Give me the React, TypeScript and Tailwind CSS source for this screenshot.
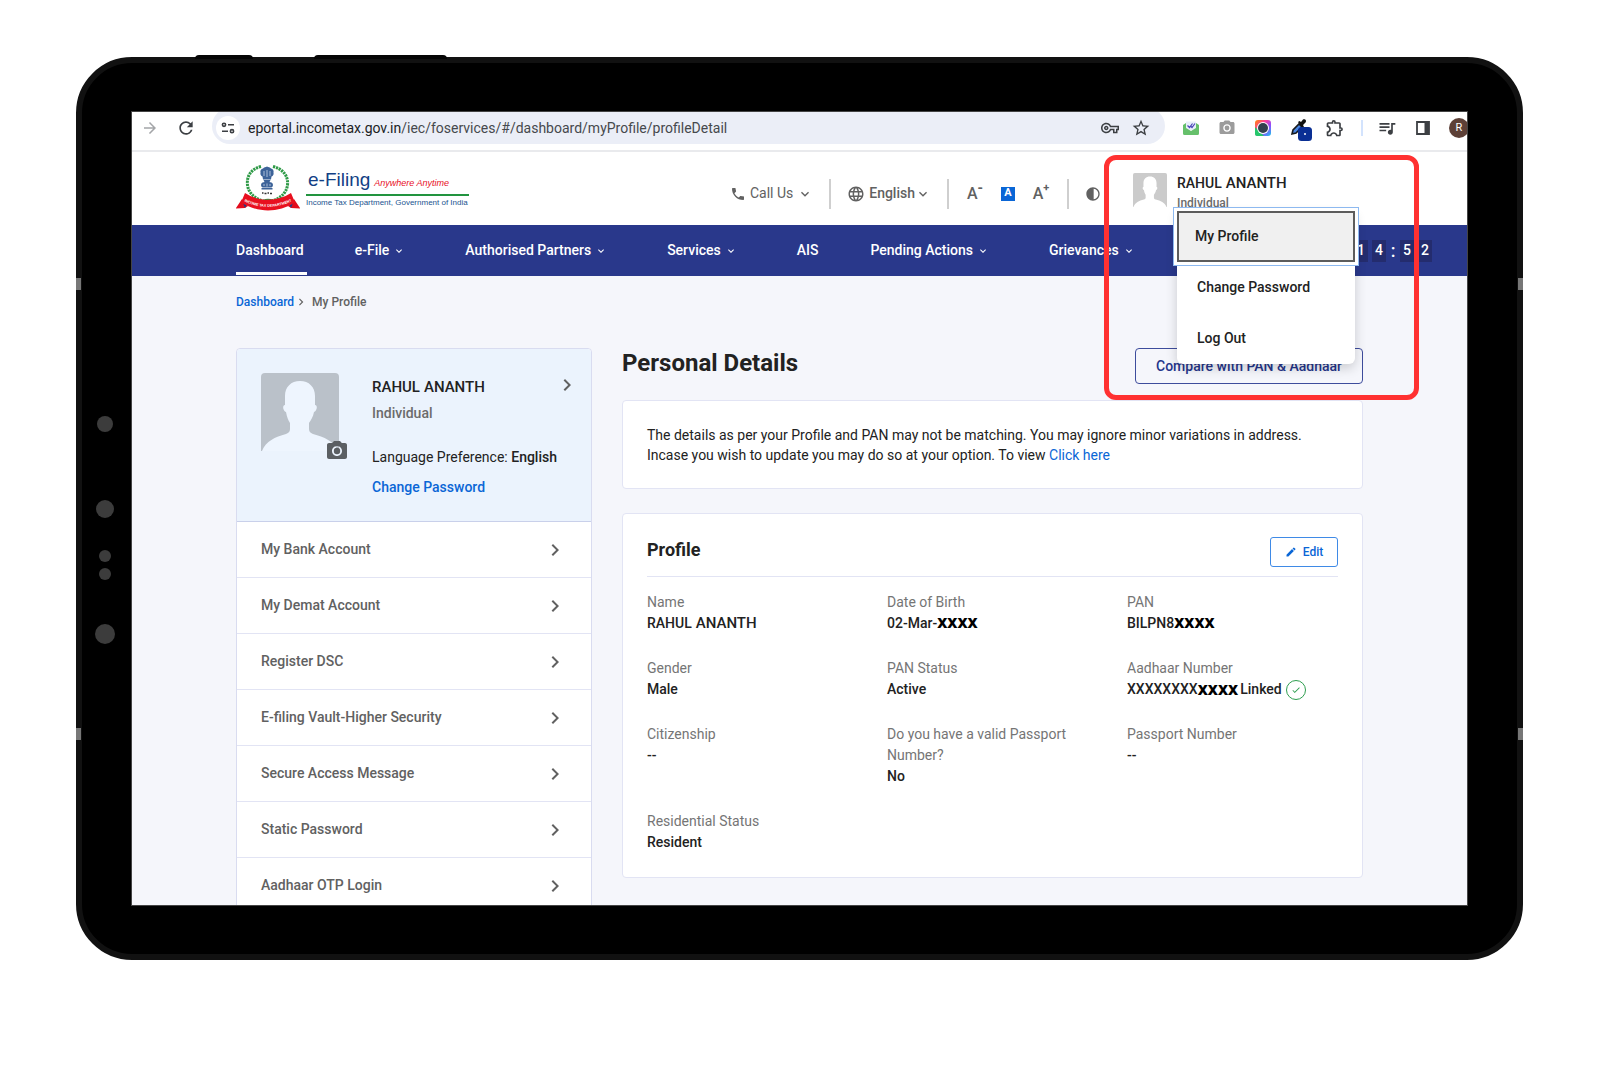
import type { ReactNode } from 'react';
import {
  MdArrowForward,
  MdCameraAlt,
  MdCheck,
  MdChevronRight,
  MdContrast,
  MdEdit,
  MdExpandMore,
  MdLanguage,
  MdOutlineExtension,
  MdOutlineVpnKey,
  MdPhone,
  MdQueueMusic,
  MdRefresh,
  MdStarOutline,
} from 'react-icons/md';

const navItems = [
  { label: 'e-File', menu: true },
  { label: 'Authorised Partners', menu: true },
  { label: 'Services', menu: true },
  { label: 'AIS', menu: false },
  { label: 'Pending Actions', menu: true },
  { label: 'Grievances', menu: true },
];

const sideLinks = [
  'My Bank Account',
  'My Demat Account',
  'Register DSC',
  'E-filing Vault-Higher Security',
  'Secure Access Message',
  'Static Password',
  'Aadhaar OTP Login',
];

const cameraDots = ['size-4', 'mt-[68px] size-[18px]', 'mt-8 size-3', 'mt-1.5 size-3', 'mt-11 size-5'];

function Masked() {
  return <span className="font-['Open_Sans',sans-serif] leading-none font-extrabold text-black">XXXX</span>;
}

function FullName() {
  return (
    <span className="inline-flex items-baseline gap-1">
      <span>RAHUL</span>
      <span className="text-[15px]">ANANTH</span>
    </span>
  );
}

const details: { label: string; value: ReactNode }[] = [
  { label: 'Name', value: <FullName /> },
  { label: 'Date of Birth', value: <>02-Mar-<Masked /></> },
  { label: 'PAN', value: <>BILPN8<Masked /></> },
  { label: 'Gender', value: 'Male' },
  { label: 'PAN Status', value: 'Active' },
  {
    label: 'Aadhaar Number',
    value: (
      <span className="flex items-center">
        XXXXXXXX<Masked />
        <span className="ml-0.5">Linked</span>
        <span className="-my-1 ml-1 flex size-5 items-center justify-center rounded-full border border-[#2e9e4f] text-[#2e9e4f]">
          <MdCheck className="size-2.5" />
        </span>
      </span>
    ),
  },
  { label: 'Citizenship', value: '--' },
  { label: 'Do you have a valid Passport Number?', value: 'No' },
  { label: 'Passport Number', value: '--' },
  { label: 'Residential Status', value: 'Resident' },
];

function Silhouette({ className, bg, fg }: { className: string; bg: string; fg: string }) {
  return (
    <svg viewBox="0 0 78 78" className={className} aria-hidden="true">
      <path d="M4 0h70a4 4 0 0 1 4 4v74H0V4a4 4 0 0 1 4-4z" fill={bg} />
      <path
        d="M39 8c-9 0-15 6-15 15v9c-3 0-2 6 1 7 1 5 2 8 4 11v6c0 2-1 4-4 5C14 64 5 68 1 78h76c-4-10-14-14-25-17-3-1-4-3-4-5v-6c2-3 4-6 5-11 3-1 4-7 1-7v-9c0-9-6-15-15-15z"
        fill={fg}
      />
    </svg>
  );
}

function Logo() {
  return (
    <div className="flex items-start gap-1.5">
      <svg viewBox="0 0 64 46" className="h-[46px] w-16 shrink-0" role="img" aria-label="Income Tax Department emblem">
        <g fill="none" stroke="#2f9a47">
          <path d="M25 1.5C15 4 10.500 11 11.500 20c1 8 7 13.500 16 16" strokeWidth="3" strokeDasharray="2.200 .8" />
          <path d="M37 1.500C47 4 52.500 11 51.500 20c-1 8-7 13.500-16 16" strokeWidth="3" strokeDasharray="2.200 .8" />
          <path d="M27 36c4-2 6-2 10 0" strokeWidth="2" />
        </g>
        <g fill="#3d6399">
          <path d="M27 3.500c1-1.500 2.500-1 4-2 1.500 1 3 .5 4 2 2 .5 3 2 2.500 4 .5 2-.5 3.500-2 4l-.5 3h-8l-.5-3c-1.500-.5-2.500-2-2-4-.5-2 .5-3.500 2.500-4z" />
          <path d="M27.500 15h7l-1 2h-5z" />
          <path d="M26.500 17.500c3-1 6-1 9 0 2 1 2 4 0 5h-9c-2-1-2-4 0-5z" />
          <path d="M25.500 23h11v1.500h-11z" />
        </g>
        <g stroke="#c8d5e8" strokeWidth=".8" fill="none">
          <path d="M28 6v5M31 5v7M34 6v5M28 19v2M31 18.500v3M34 19v2" />
        </g>
        <path d="M26 28h1.500M28.500 28.500h2M31.500 28h1.500M34 28.500h2" stroke="#333" strokeWidth="1.500" />
        <path d="M0 43l6-9 6 7-3 2-9 .5zM64 43l-6-9-6 7 3 2 9 .5z" fill="#e30b1c" />
        <path d="M7 38l4 1-2 4zM57 38l-4 1 2 4z" fill="#1f3d86" />
        <path d="M9 28c14 9 32 9 46 0l4 9.500c-17 10.500-37 10.500-54 0z" fill="#e8101f" />
        <path id="ribbon" d="M7 35.500c15 8.500 35 8.500 50 0" fill="none" />
        <text
          fill="#fff"
          className="font-['Liberation_Sans',Arial,sans-serif] font-bold"
          fontSize="3.700"
          textAnchor="middle"
        >
          <textPath href="#ribbon" startOffset="50%">INCOME TAX DEPARTMENT</textPath>
        </text>
      </svg>
      <div className="mt-1 w-[163px] font-['Liberation_Sans',Arial,sans-serif] whitespace-nowrap">
        <div className="flex items-baseline gap-1 border-b-2 border-[#22943f] pl-0.5 leading-[22px]">
          <span className="text-[19px] text-[#123f85]">e-Filing</span>
          <span className="text-[9px] text-[#e8101f] italic">Anywhere Anytime</span>
        </div>
        <div className="text-[8px] leading-[14px] text-[#1b548f]">Income Tax Department, Government of India</div>
      </div>
    </div>
  );
}

function BrowserBar() {
  return (
    <div className="flex h-10 shrink-0 items-start overflow-hidden border-b-2 border-[#e9eaed] bg-white text-[#3c3f43]">
      <div className="flex h-8 items-center gap-[17px] pr-4 pl-[9px]">
        <button aria-label="Forward" className="text-[#a3a5a8]">
          <MdArrowForward className="size-[18px]" />
        </button>
        <button aria-label="Reload">
          <MdRefresh className="size-5" />
        </button>
      </div>
      <div className="-mt-1 flex h-9 min-w-0 flex-1 items-center rounded-full bg-[#ebeef7] pt-1 pr-3.5 pl-1">
        <button aria-label="Site information" className="flex size-6 items-center justify-center rounded-full bg-white">
          <svg viewBox="0 0 14 12" className="h-3 w-3.5" fill="none" stroke="currentColor" strokeWidth="1.600">
            <circle cx="3" cy="2.800" r="1.600" />
            <path d="M7 2.800h6M1 9.200h6" />
            <circle cx="11" cy="9.200" r="1.600" />
          </svg>
        </button>
        <span className="ml-2 text-[14px] whitespace-nowrap text-[#46494d]">
          <span className="text-[#202124]">eportal.incometax.gov.in</span>/iec/foservices/#/dashboard/myProfile/profileDetail
        </span>
        <div className="ml-auto flex items-center gap-3">
          <MdOutlineVpnKey className="size-[18px]" />
          <MdStarOutline className="size-5" />
        </div>
      </div>
      <div className="-mr-0.5 ml-4 flex h-8 shrink-0 items-center gap-4">
        <svg viewBox="0 0 20 20" className="size-5">
          <path d="M5 3.500h10V12H5z" fill="#e8eefb" />
          <path d="M2 7l3-2v5l5 3 5-3V5l3 2v8.500a1.500 1.500 0 0 1-1.500 1.500h-13A1.500 1.500 0 0 1 2 15.500z" fill="#66c06b" />
          <path d="M6.500 7.500l2 2 3-4M10 8.500l1 1 3-4" fill="none" stroke="#4a46b8" strokeWidth="1.200" />
        </svg>
        <MdCameraAlt className="size-5 shrink-0 p-px text-[#9c9c9c]" />
        <svg viewBox="0 0 20 20" className="size-5">
          <defs>
            <linearGradient id="rainbow" x1="0" y1="0" x2="1" y2="1">
              <stop offset="0" stopColor="#ff8a00" />
              <stop offset=".35" stopColor="#ff3d9a" />
              <stop offset=".65" stopColor="#8f4dff" />
              <stop offset="1" stopColor="#12c8e8" />
            </linearGradient>
          </defs>
          <rect x="2" y="2" width="16" height="16" rx="3" fill="url(#rainbow)" />
          <path d="M2 9v7a2 2 0 0 0 2 2h7z" fill="#25c76b" />
          <circle cx="10" cy="10" r="6" fill="#fff" />
          <circle cx="10" cy="10" r="5" fill="#33404d" />
        </svg>
        <svg viewBox="0 0 20 20" className="size-5 overflow-visible">
          <path d="M3 16l1-4 6-6 3 3-6 6z" fill="#4a86e0" stroke="#16191d" strokeWidth="1.600" />
          <path d="M9 4l1.500-1 1.500 1 2-2.500c2-1 4 1 2.500 3L14 7l1 2-1.500 1.500z" fill="#111" />
          <rect x="9" y="9" width="14" height="14" rx="3.500" fill="#0a2f94" />
          <circle cx="16" cy="16" r="1" fill="#fff" />
        </svg>
        <MdOutlineExtension className="size-5 shrink-0" />
        <span className="-mr-0.5 h-4 w-0.5 bg-[#d3e3fd]" />
        <MdQueueMusic className="size-5 shrink-0" />
        <svg viewBox="0 0 20 20" className="size-5">
          <path d="M4 4h12v12H4z" fill="none" stroke="currentColor" strokeWidth="1.800" />
          <path d="M11.500 4H16v12h-4.500z" fill="currentColor" />
        </svg>
        <span className="flex size-5 shrink-0 items-center justify-center rounded-full bg-[#5d4037] text-[11px] text-white">
          R
        </span>
      </div>
    </div>
  );
}

function UserMenu() {
  return (
    <div className="relative mt-2 flex w-[230px] gap-2.5">
      <Silhouette className="size-[34px]" bg="#cbcbcb" fg="#ffffff" />
      <div>
        <div className="text-[14px] leading-5 font-medium text-[#222]">
          <FullName />
        </div>
        <div className="text-[12px] leading-5 font-medium text-[#6b6b6b]">Individual</div>
      </div>
      <div
        role="menu"
        className="absolute top-[38px] left-11 z-20 flex w-[178px] flex-col rounded-md bg-white text-left text-[14px] font-medium text-[#222] shadow-[0_4px_12px_rgba(0,0,0,0.18)]"
      >
        <button
          role="menuitem"
          className="h-[51px] border-2 border-[#5c5c5c] bg-[#f0f0f0] px-4 text-left outline-1 outline-offset-[3px] outline-[#8db9f0] ring-3 ring-white"
        >
          My Profile
        </button>
        <button role="menuitem" className="h-[51px] px-5 text-left">Change Password</button>
        <button role="menuitem" className="h-[51px] px-5 text-left">Log Out</button>
      </div>
    </div>
  );
}

function Header() {
  return (
    <header className="flex h-[73px] shrink-0 items-start justify-between bg-white px-[104px] pt-[13px]">
      <Logo />
      <div className="flex items-start gap-8 text-[#616161]">
        <div className="flex h-[57px] items-center gap-4 text-[14px]">
          <button className="flex items-center gap-1">
            <MdPhone className="size-4" />
            Call Us
            <MdExpandMore className="size-4" />
          </button>
          <span className="h-[30px] w-0.5 bg-[#cfcfcf]" />
          <button className="flex items-center gap-1 font-medium">
            <MdLanguage className="size-[18px]" />
            English
            <MdExpandMore className="-ml-1 size-4" />
          </button>
          <span className="h-[30px] w-0.5 bg-[#cfcfcf]" />
          <button aria-label="Decrease text size" className="flex w-5 items-start justify-center text-[16px] leading-4 font-medium">
            A<span className="-mt-1 text-[14px] leading-3 font-bold">-</span>
          </button>
          <button aria-label="Normal text size" className="flex size-3.5 items-center justify-center bg-[#0a66d6] text-[11px] font-bold text-white">
            A
          </button>
          <button aria-label="Increase text size" className="flex w-5 items-start justify-center text-[16px] leading-4 font-medium">
            A<span className="-mt-1 text-[11px] leading-3 font-bold">+</span>
          </button>
          <span className="h-[30px] w-0.5 bg-[#cfcfcf]" />
          <button aria-label="Contrast">
            <MdContrast className="size-4" />
          </button>
        </div>
        <UserMenu />
      </div>
    </header>
  );
}

function TimerDigit({ children }: { children: ReactNode }) {
  return <span className="flex h-[22px] w-3.5 items-center justify-center bg-[#242c6e]">{children}</span>;
}

function NavBar() {
  return (
    <nav className="flex h-[51px] shrink-0 items-center justify-between bg-[#29388b] pr-[35px] pl-[104px] text-[14px] font-medium text-white">
      <div className="flex h-full gap-12 whitespace-nowrap">
        <a href="#dashboard" className="flex h-[50px] items-center border-y-3 border-t-transparent border-b-white pr-[3px]">
          Dashboard
        </a>
        {navItems.map((item) => (
          <a key={item.label} href="#menu" className={item.menu ? 'flex items-center gap-1 pr-3' : 'flex items-center pr-1'}>
            {item.label}
            {item.menu && <MdExpandMore className="size-3" />}
          </a>
        ))}
      </div>
      <div className="flex items-center gap-1">
        <TimerDigit>1</TimerDigit>
        <TimerDigit>4</TimerDigit>
        <span className="w-1.5 text-center text-[18px]">:</span>
        <TimerDigit>5</TimerDigit>
        <TimerDigit>2</TimerDigit>
      </div>
    </nav>
  );
}

function Sidebar() {
  return (
    <aside className="w-[356px] shrink-0 rounded border border-[#d9dcf0] bg-white">
      <div className="flex h-[173px] gap-[33px] rounded-t border-b border-[#c9d0ea] bg-[#ebf3fd] px-6 pt-6">
        <div className="relative h-[78px]">
          <Silhouette className="size-[78px]" bg="#bac1c9" fg="#eef5fe" />
          <button aria-label="Change photo" className="absolute -right-2.5 -bottom-3 text-[#5b5f63]">
            <MdCameraAlt className="size-6" />
          </button>
        </div>
        <div className="min-w-0 flex-1 whitespace-nowrap">
          <div className="flex items-start justify-between">
            <span className="text-[15px] leading-7 font-medium text-[#222]">
              <FullName />
            </span>
            <MdChevronRight className="-mr-3 size-6 text-[#616161]" />
          </div>
          <div className="text-[14px] leading-6 font-medium text-[#6b6b6b]">Individual</div>
          <div className="pt-5 text-[14px] leading-6 text-[#222]">
            Language Preference: <span className="font-medium">English</span>
          </div>
          <a href="#password" className="block pt-1.5 text-[14px] leading-6 font-medium text-[#0a66d6]">
            Change Password
          </a>
        </div>
      </div>
      {sideLinks.map((label) => (
        <a
          key={label}
          href="#section"
          className="flex h-14 items-center justify-between border-b border-[#e2e4f4] px-6 text-[14px] font-medium text-[#616161]"
        >
          {label}
          <MdChevronRight className="size-6" />
        </a>
      ))}
    </aside>
  );
}

function ProfileCard() {
  return (
    <section className="mt-6 rounded border border-[#e2e4f4] bg-white px-6 pt-[23px] pb-6">
      <div className="flex items-start justify-between border-b border-[#e2e4f4] pb-[9px]">
        <h2 className="text-[18px] leading-[26px] font-bold">Profile</h2>
        <button className="flex h-[30px] w-[68px] items-center justify-center gap-1.5 rounded-[3px] border border-[#3f8ae6] text-[12px] font-medium text-[#0a66d6]">
          <MdEdit className="size-3" />
          Edit
        </button>
      </div>
      <dl className="grid grid-cols-3 gap-x-[29px] gap-y-6 pt-[15px] text-[14px] leading-[21px]">
        {details.map((d) => (
          <div key={d.label}>
            <dt className="text-[#757575]">{d.label}</dt>
            <dd className="font-medium whitespace-nowrap">{d.value}</dd>
          </div>
        ))}
      </dl>
    </section>
  );
}

function Portal() {
  return (
    <div className="min-h-0 flex-1 overflow-hidden bg-[#f5f6fb] px-[104px] text-[#222]">
      <div className="flex items-center pt-4 text-[12px] leading-5 font-medium">
        <a href="#dashboard" className="text-[#0a66d6]">Dashboard</a>
        <MdChevronRight className="mr-1 size-3.5 text-[#616161]" />
        <span className="text-[#616161]">My Profile</span>
      </div>
      <div className="flex items-start gap-[30px] pt-9">
        <Sidebar />
        <main className="min-w-0 flex-1">
          <div className="flex h-9 items-start justify-between">
            <h1 className="text-[24px] leading-[30px] font-bold">Personal Details</h1>
            <button className="h-9 rounded border border-[#3d4c9c] px-5 text-[14px] font-medium text-[#26368b]">
              Compare with PAN &amp; Aadhaar
            </button>
          </div>
          <p className="mt-4 rounded border border-[#e2e4f4] bg-white px-6 pt-6 pb-[23px] text-[14px] leading-5">
            The details as per your Profile and PAN may not be matching. You may ignore minor variations in address.
            Incase you wish to update you may do so at your option. To view{' '}
            <a href="#details" className="text-[#0a66d6]">Click here</a>
          </p>
          <ProfileCard />
        </main>
      </div>
    </div>
  );
}

export default function App() {
  return (
    <div className="h-screen bg-white pt-[57px] pr-[77px] pb-[106px] pl-[76px] font-[Roboto,sans-serif]">
      <div className="relative h-full rounded-[56px] border-[6px] border-[#111] bg-black px-[50px] py-[49px]">
        {/* hardware buttons */}
        <span className="absolute -top-2 left-[113px] h-1 w-[58px] rounded-t-sm bg-[#050505]" />
        <span className="absolute -top-2 left-[232px] h-1 w-[133px] rounded-t-sm bg-[#050505]" />
        {/* antenna bands */}
        <span className="absolute top-[215px] -left-1.5 h-3 w-[5px] bg-[#777]" />
        <span className="absolute top-[665px] -left-1.5 h-3 w-[5px] bg-[#777]" />
        <span className="absolute top-[215px] -right-1.5 h-3 w-[5px] bg-[#777]" />
        <span className="absolute top-[665px] -right-1.5 h-3 w-[5px] bg-[#777]" />
        {/* front camera and sensors */}
        <div className="absolute inset-y-0 left-[13px] flex w-5 flex-col items-center pt-[353px]">
          {cameraDots.map((dot) => (
            <span key={dot} className={`shrink-0 rounded-full bg-[#3c3c3c] ${dot}`} />
          ))}
        </div>

        <div className="relative flex h-full flex-col overflow-hidden outline-1 outline-[#444]">
          <BrowserBar />
          <Header />
          <NavBar />
          <Portal />
          <div className="pointer-events-none absolute top-[43px] right-12 z-30 h-[245px] w-[315px] rounded-xl border-5 border-[#ff3131]" />
        </div>
      </div>
    </div>
  );
}
